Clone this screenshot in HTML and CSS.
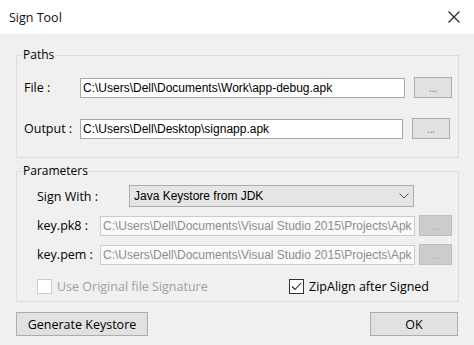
FILE: index.html
```html
<!DOCTYPE html>
<html lang="en">

<head>
  <meta charset="UTF-8">
  <title>Sign Tool</title>
  <link rel="stylesheet" href="styles.css">
</head>

<body>

<div class="window">
  <div class="title-bar">
    <span class="title">Sign Tool</span>
    <svg class="close" width="12" height="12" viewBox="0 0 12 12">
      <path d="M0.5 0.5 L11.5 11.5 M11.5 0.5 L0.5 11.5" stroke="#222" stroke-width="1.1" fill="none"/>
    </svg>
  </div>

  <div class="client">
    <fieldset class="group group-paths">
      <legend>Paths</legend>
      <div class="path-row">
        <label class="path-label">File :</label>
        <input class="text-box path-box" type="text" value="C:\Users\Dell\Documents\Work\app-debug.apk">
        <button class="win-button browse" type="button">...</button>
      </div>
      <div class="path-row row-output">
        <label class="path-label">Output :</label>
        <input class="text-box path-box box-output" type="text" value="C:\Users\Dell\Desktop\signapp.apk">
        <button class="win-button browse" type="button">...</button>
      </div>
    </fieldset>

    <fieldset class="group group-params">
      <legend>Parameters</legend>
      <div class="param-row">
        <label class="sign-label">Sign With :</label>
        <div class="combo">
          <span>Java Keystore from JDK</span>
          <svg width="10" height="6" viewBox="0 0 10 6">
            <path d="M0.5 0.5 L5 5 L9.5 0.5" stroke="#555" stroke-width="1" fill="none"/>
          </svg>
        </div>
      </div>
      <div class="param-row key-row">
        <label class="key-label">key.pk8 :</label>
        <input class="text-box key-box" type="text" disabled value="C:\Users\Dell\Documents\Visual Studio 2015\Projects\Apk">
        <button class="win-button key-browse" type="button" disabled>...</button>
      </div>
      <div class="param-row key-row">
        <label class="key-label">key.pem :</label>
        <input class="text-box key-box" type="text" disabled value="C:\Users\Dell\Documents\Visual Studio 2015\Projects\Apk">
        <button class="win-button key-browse" type="button" disabled>...</button>
      </div>
      <div class="check-row">
        <label class="check disabled">
          <span class="check-box"></span>
          Use Original file Signature
        </label>
        <label class="check">
          <span class="check-box">
            <svg width="11" height="9" viewBox="0 0 11 9">
              <path d="M1 4.5 L4 7.5 L10 1" stroke="#222" stroke-width="1.1" fill="none"/>
            </svg>
          </span>
          ZipAlign after Signed
        </label>
      </div>
    </fieldset>

    <div class="footer">
      <button class="win-button btn-generate" type="button">Generate Keystore</button>
      <button class="win-button btn-ok" type="button">OK</button>
    </div>
  </div>
</div>

</body>
</html>
```

FILE: styles.css
```css
* {
  box-sizing: border-box;
}

body {
  margin: 0;
  font-family: 'Open Sans', 'Noto Sans', sans-serif;
  font-size: 12px;
  color: #000;
}

.window {
  width: 474px;
  height: 345px;
  background-color: #f0f0f0;
  display: flex;
  flex-direction: column;
}

.title-bar {
  height: 34px;
  background-color: #fff;
  display: flex;
  align-items: center;
  padding: 0 14px 0 9px;
  flex-shrink: 0;
}

.title {
  font-size: 12.5px;
  color: #111;
}

.close {
  margin-left: auto;
}

.client {
  padding: 13px 15px 0 16px;
}

.group {
  margin: 0;
  border: 1px solid #dcdcdc;
  border-radius: 0;
  min-width: 0;
}

.group legend {
  padding: 0 1px;
  line-height: 16px;
  color: #000;
}

.group-paths {
  height: 111px;
  padding: 14px 6px 0 7px;
}

.group-paths legend {
  margin-left: -2px;
}

.group-params {
  margin-top: 5px;
  height: 139px;
  padding: 6px 6px 0 20px;
}

.group-params legend {
  margin-left: -15px;
}

.path-row {
  display: flex;
  align-items: center;
  height: 21px;
}

.row-output {
  margin-top: 20px;
}

.path-label {
  width: 56px;
  font-size: 12.5px;
}

.text-box {
  height: 20px;
  border: 1px solid #a8a8a8;
  background-color: #fff;
  font-family: 'Liberation Sans', Arial, sans-serif;
  font-size: 12px;
  color: #000;
  padding: 0 2px;
  margin: 0;
  outline: none;
}

.path-box {
  width: 325px;
}

.box-output {
  width: 323px;
}

.win-button {
  font-family: inherit;
  font-size: 12.5px;
  color: #000;
  background-color: #e1e1e1;
  border: 1px solid #adadad;
  border-radius: 0;
  margin: 0;
  padding: 0;
}

.browse {
  width: 38px;
  height: 21px;
  margin-left: 9px;
  color: #777;
  font-size: 10px;
  line-height: 14px;
}

.param-row {
  display: flex;
  align-items: center;
}

.sign-label {
  width: 92px;
  font-size: 12.5px;
}

.combo {
  width: 285px;
  height: 22px;
  border: 1px solid #adadad;
  background-color: #e5e5e5;
  display: flex;
  align-items: center;
  justify-content: space-between;
  padding: 0 4px;
  font-family: 'Liberation Sans', Arial, sans-serif;
  font-size: 12px;
}

.key-row {
  margin-top: 8px;
}

.key-label {
  width: 63px;
  font-size: 12.5px;
}

.key-box {
  width: 315px;
  height: 20px;
  border-color: #cccccc;
  background-color: #fafafa;
  color: #8d8d8d;
}

.key-box:disabled {
  color: #8d8d8d;
  background-color: #fafafa;
}

.key-browse {
  width: 33px;
  height: 21px;
  margin-left: 4px;
  background-color: #cccccc;
  border-color: #bfbfbf;
  color: #aaa;
  font-size: 10px;
}

.check-row {
  display: flex;
  justify-content: space-between;
  align-items: center;
  margin-top: 13px;
  padding-right: 23px;
}

.check {
  display: flex;
  align-items: center;
  gap: 5px;
  font-size: 12.5px;
}

.check.disabled {
  color: #a0a0a0;
}

.check-box {
  width: 15px;
  height: 15px;
  border: 1px solid #333;
  background-color: #fff;
  display: flex;
  align-items: center;
  justify-content: center;
}

.check.disabled .check-box {
  border-color: #cccccc;
}

.footer {
  display: flex;
  justify-content: space-between;
  margin-top: 10px;
}

.btn-generate {
  width: 132px;
  height: 24px;
}

.btn-ok {
  width: 88px;
  height: 24px;
  margin-right: 1px;
}
```
